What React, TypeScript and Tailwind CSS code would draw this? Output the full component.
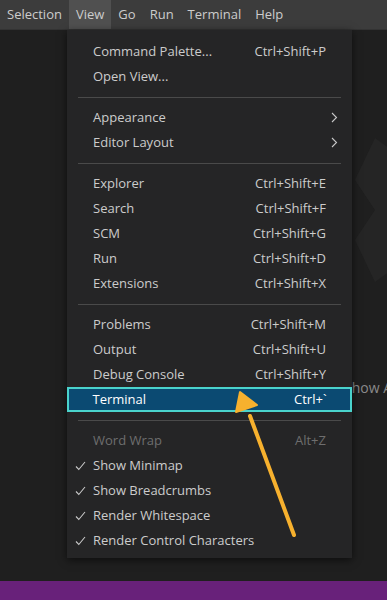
import {ReactNode} from "react";

type Item =
    | {kind: "sep"}
    | {kind: "item"; label: string; keys?: string; sub?: boolean; check?: boolean; disabled?: boolean; active?: boolean};

const menus = ["Selection", "View", "Go", "Run", "Terminal", "Help"];

const items: Item[] = [
    {kind: "item", label: "Command Palette...", keys: "Ctrl+Shift+P"},
    {kind: "item", label: "Open View..."},
    {kind: "sep"},
    {kind: "item", label: "Appearance", sub: true},
    {kind: "item", label: "Editor Layout", sub: true},
    {kind: "sep"},
    {kind: "item", label: "Explorer", keys: "Ctrl+Shift+E"},
    {kind: "item", label: "Search", keys: "Ctrl+Shift+F"},
    {kind: "item", label: "SCM", keys: "Ctrl+Shift+G"},
    {kind: "item", label: "Run", keys: "Ctrl+Shift+D"},
    {kind: "item", label: "Extensions", keys: "Ctrl+Shift+X"},
    {kind: "sep"},
    {kind: "item", label: "Problems", keys: "Ctrl+Shift+M"},
    {kind: "item", label: "Output", keys: "Ctrl+Shift+U"},
    {kind: "item", label: "Debug Console", keys: "Ctrl+Shift+Y"},
    {kind: "item", label: "Terminal", keys: "Ctrl+`", active: true},
    {kind: "sep"},
    {kind: "item", label: "Word Wrap", keys: "Alt+Z", disabled: true},
    {kind: "item", label: "Show Minimap", check: true},
    {kind: "item", label: "Show Breadcrumbs", check: true},
    {kind: "item", label: "Render Whitespace", check: true},
    {kind: "item", label: "Render Control Characters", check: true},
];

function Check() {
    return (
        <svg width="11" height="10" viewBox="0 0 11 10" className="absolute left-[8px] top-[8px]">
            <path d="M1 5.5 L3.8 8.5 L10 1" fill="none" stroke="#c8c8c8" strokeWidth="1.1"/>
        </svg>
    );
}

function Chevron() {
    return (
        <svg width="7" height="11" viewBox="0 0 7 11" className="absolute right-[14px] top-[7px]">
            <path d="M1 1 L5.5 5.5 L1 10" fill="none" stroke="#c8c8c8" strokeWidth="1.1"/>
        </svg>
    );
}

function Row({item}: {item: Item}): ReactNode {
    if (item.kind === "sep") {
        return <div className="h-[16px] flex items-center px-[11px]"><div className="h-px w-full bg-[#4a4a4a]"/></div>;
    }
    const color = item.disabled ? "text-[#6e6e6e]" : item.active ? "text-white" : "text-[#cccccc]";
    const box = item.active
        ? "bg-[#0b4a72] border-[2.5px] border-[#4ad3cc] h-[25px]"
        : "h-[25px]";
    return (
        <div className={`relative flex items-center justify-between pl-[26px] pr-[26px] ${box} ${color}`}>
            {item.check && <Check/>}
            <span className={item.active ? "-ml-[2.5px]" : ""}>{item.label}</span>
            {item.keys && <span className={item.active ? "-mr-[2.5px]" : ""}>{item.keys}</span>}
            {item.sub && <Chevron/>}
        </div>
    );
}

export default function App() {
    return (
        <div className="relative w-[387px] h-[600px] overflow-hidden flex flex-col bg-[#1e1e1e] text-[13px] font-['Open_Sans','Noto_Sans',sans-serif]">
            <div className="h-[30px] bg-[#3c3c3c] flex items-stretch text-[#cccccc] border-b border-[#333]">
                {menus.map(m => (
                    <div key={m} className={`flex items-center px-[7px] ${m === "View" ? "bg-[#505050]" : ""}`}>{m}</div>
                ))}
            </div>

            <div className="relative flex-1 bg-[#1f1f1f]">
                {/* faint logo watermark */}
                <svg className="absolute left-[345px] top-[100px]" width="60" height="160" viewBox="0 0 60 160">
                    <path d="M30 8 L60 30 L60 130 L30 152 L10 110 L30 80 L10 50 Z" fill="#252525"/>
                </svg>
                <div className="absolute left-[344px] top-[347px] text-[14px] text-[#8a8a8a] whitespace-nowrap">Show All Commands</div>

                <div className="absolute left-[67px] top-0 w-[285px] bg-[#252526] pt-[9px] pb-[5px] shadow-[0_2px_8px_rgba(0,0,0,0.6)]">
                    {items.map((it, i) => <Row key={i} item={it}/>)}
                </div>
            </div>

            <div className="h-[19px] bg-[#68217a]"/>

            <svg className="absolute left-0 top-0 pointer-events-none" width="387" height="600" viewBox="0 0 387 600">
                <line x1="294" y1="535" x2="250" y2="416" stroke="#f7b12e" strokeWidth="4" strokeLinecap="round"/>
                <path d="M240 392 L236 412 L257 405 Z" fill="#f7b12e" stroke="#f7b12e" strokeWidth="2" strokeLinejoin="round"/>
            </svg>
        </div>
    );
}
